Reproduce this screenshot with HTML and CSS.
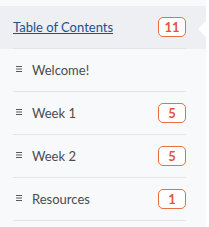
FILE: index.html
```html
<!DOCTYPE html>
<html>
<head>
<meta charset="utf-8">
<link rel="stylesheet" href="styles.css">
</head>
<body>
<nav class="sidebar">
  <div class="row active">
    <div class="inner">
      <a class="toc-link" href="#">Table of Contents</a>
      <span class="badge">11</span>
    </div>
    <span class="pointer"></span>
  </div>
  <div class="row">
    <div class="inner">
      <svg class="drag" width="6" height="6" viewBox="0 0 6 6"><rect x="0" y="0" width="6" height="1"/><rect x="0" y="2.5" width="6" height="1"/><rect x="0" y="5" width="6" height="1"/></svg>
      <span class="label">Welcome!</span>
    </div>
  </div>
  <div class="row">
    <div class="inner">
      <svg class="drag" width="6" height="6" viewBox="0 0 6 6"><rect x="0" y="0" width="6" height="1"/><rect x="0" y="2.5" width="6" height="1"/><rect x="0" y="5" width="6" height="1"/></svg>
      <span class="label">Week 1</span>
      <span class="badge">5</span>
    </div>
  </div>
  <div class="row">
    <div class="inner">
      <svg class="drag" width="6" height="6" viewBox="0 0 6 6"><rect x="0" y="0" width="6" height="1"/><rect x="0" y="2.5" width="6" height="1"/><rect x="0" y="5" width="6" height="1"/></svg>
      <span class="label">Week 2</span>
      <span class="badge">5</span>
    </div>
  </div>
  <div class="row">
    <div class="inner">
      <svg class="drag" width="6" height="6" viewBox="0 0 6 6"><rect x="0" y="0" width="6" height="1"/><rect x="0" y="2.5" width="6" height="1"/><rect x="0" y="5" width="6" height="1"/></svg>
      <span class="label">Resources</span>
      <span class="badge">1</span>
    </div>
  </div>
</nav>
</body>
</html>
```

FILE: styles.css
```css
html, body {
  margin: 0;
  padding: 0;
  background: #ffffff;
}
body {
  font-family: Lato, "Liberation Sans", sans-serif;
  width: 209px;
  height: 227px;
  overflow: hidden;
}
.sidebar {
  width: 206px;
  height: 227px;
  box-sizing: border-box;
  padding-top: 6px;
  background: #f8f9fb;
}
.row {
  position: relative;
}
.row.active {
  background: #edeff3;
}
.inner {
  height: 43px;
  box-sizing: border-box;
  margin: 0 20px 0 13px;
  border-bottom: 1px solid #e3e5ea;
  display: flex;
  align-items: center;
}
.toc-link {
  font-size: 13px;
  color: #1d4f91;
  text-decoration: underline;
  flex: 1;
}
.drag {
  fill: #565a5c;
  margin: -3px 10px 0 3px;
  flex: none;
}
.label {
  font-size: 13px;
  color: #494c4e;
  flex: 1;
}
.badge {
  width: 28px;
  height: 20px;
  box-sizing: border-box;
  border: 1px solid #e8703f;
  border-radius: 5px;
  background: #ffffff;
  color: #e2553a;
  font-weight: 700;
  font-size: 13px;
  display: flex;
  align-items: center;
  justify-content: center;
  flex: none;
}
.pointer {
  position: absolute;
  right: 0;
  top: 15px;
  width: 0;
  height: 0;
  border-top: 8px solid transparent;
  border-bottom: 8px solid transparent;
  border-right: 8px solid #ffffff;
}
```
